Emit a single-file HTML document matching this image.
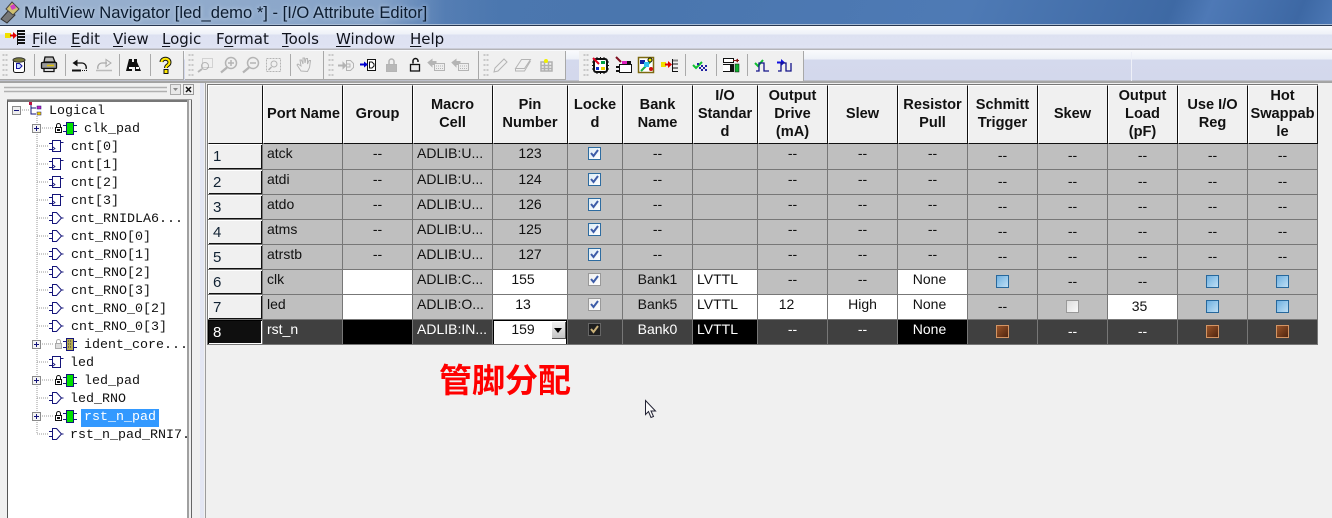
<!DOCTYPE html>
<html lang="en"><head><meta charset="utf-8"><title>MultiView Navigator</title>
<style>
html,body{margin:0;padding:0}
body{width:1332px;height:518px;position:relative;overflow:hidden;background:#f0f0f0;font-family:"Liberation Sans","Noto Sans CJK SC",sans-serif;color:#111}
.a{position:absolute}
#title{left:0;top:0;width:1332px;height:24px;background:linear-gradient(90deg,rgba(185,200,218,.75) 0,rgba(170,190,215,.6) 380px,rgba(120,150,195,.2) 445px,rgba(80,120,175,0) 500px),linear-gradient(112deg,#4f7ab2 0,#4a76ae 600px,#4e7ab5 900px,#3e69a4 1090px,#4e79b6 1125px,#3d68a4 1210px,#4c78b5 1245px,#4c78b5 1332px)}
#tt{left:24px;top:3px;font-size:16.58px;line-height:19px;color:#0c1c30;white-space:nowrap;text-shadow:0 0 4px #cfdceb}
#tl1{left:0;top:24px;width:1332px;height:1px;background:#a9bdd6}
#tl2{left:0;top:25px;width:1332px;height:1px;background:#27364f}
#menu{left:0;top:26px;width:1332px;height:24px;background:linear-gradient(#fcfdfe 0,#eef1f8 8px,#dde1f1 9px,#dfe3f3 22px,#b4b4b8 23px)}
#tb{left:0;top:50px;width:1332px;height:33px;background:linear-gradient(#fafbfd 0,#eef1f8 9px,#d4d9ed 10px,#d3d8ec 30px,#a8a8a8 31px,#a0a0a0 33px)}
.m{top:29px;font-family:"DejaVu Sans",sans-serif;font-size:15px;line-height:20px;color:#10131c;white-space:nowrap}
.m u{text-underline-offset:2px}
.bar{top:51px;height:28px;background:#f0f0f0;border-right:1px solid #a8a8a8;border-bottom:1px solid #a8a8a8}
#left{left:7px;top:100px;width:180px;height:418px;background:#fff;border-left:1px solid #555;border-top:2px solid #777;box-sizing:border-box}
.t{font-family:"Liberation Mono",monospace;font-size:13.33px;line-height:18px;height:18px;margin-top:2px;color:#111;white-space:pre}
#grid{left:207px;top:84px;display:grid;grid-template-columns:54px 79px 69px 79px 74px 54px 69px 64px repeat(8,69px);grid-template-rows:58px 25px repeat(7,24px);gap:1px;padding:1px;background:#777;font-size:14px}
#grid>div{position:relative;background:#bfbfbf;text-align:center;line-height:19px;white-space:nowrap;overflow:hidden;color:#111}
#grid>div.h{background:#f0f0f0;font-weight:bold;font-size:14.6px;line-height:18px;padding-bottom:1px;box-sizing:border-box;display:flex;align-items:center;justify-content:center;box-shadow:inset 1px 1px 0 #fff,1px 1px 0 #111;overflow:visible}
#grid>div.n{background:#f0f0f0;text-align:left;padding:3px 0 0 5px;box-sizing:border-box;font-size:15px;color:#123;box-shadow:inset 1px 1px 0 #fff,inset -1px -1px 0 #111}
#grid>div.l{text-align:left;padding-left:4px}
#grid>div.w{background:#fff}
#grid>div.k{background:#000;color:#fff}
#grid>div.d{background:#404040;color:#fff}
#grid>div.lo{padding-top:2px;box-sizing:border-box}
#grid>div.p{padding-right:14px;box-sizing:border-box}
#grid>div.no{padding-right:12px;box-sizing:border-box}
#grid>div.n5{padding-right:6px;box-sizing:border-box}
#grid>div.f{padding-right:6px;box-sizing:border-box}
.x{display:block;position:absolute;left:50%;top:5px;width:13px;height:13px;margin-left:-7px;box-sizing:border-box}
.b{border:1px solid #27689c;background:linear-gradient(135deg,#6fb0e0,#bfdff4)}
.g{border:1px solid #999;background:linear-gradient(135deg,#dcdcdc,#fafafa)}
.o{border:1px solid #d39463;background:linear-gradient(135deg,#9a5428,#4f2610)}
.x.c1,.x.c2,.x.c3{top:3px}
.x.c1{border:1px solid #2e6ca0;background:linear-gradient(135deg,#dcebf6,#fff)}
.x.c2{border:1px solid #999;background:linear-gradient(135deg,#eee,#fff)}
.x.c3{border:1px solid #666;background:#1f1f1f}
.x svg{display:block}
#combo{position:absolute;left:0;top:0;width:74px;height:24px;box-sizing:border-box;border:1px solid #000;border-bottom:0}
#btn{position:absolute;left:59px;top:2px;width:14px;height:17px;box-sizing:border-box;background:linear-gradient(#f0f0f0,#c4c4c4);border-right:1px solid #555;border-bottom:1px solid #555}
#btn:after{content:"";position:absolute;left:2px;top:6px;border:4px solid transparent;border-top:5px solid #000;border-bottom:0}
#red{left:439px;top:357px;font-size:33px;line-height:42px;font-weight:bold;color:#f00;white-space:nowrap;font-family:"Noto Sans CJK SC","WenQuanYi Zen Hei",sans-serif}
</style></head>
<body>
<div class="a" id="title"></div><div class="a" id="tt">MultiView Navigator [led_demo *] - [I/O Attribute Editor]</div>
<div class="a" id="tl1"></div><div class="a" id="tl2"></div>
<div class="a" id="menu"></div><div class="a" id="tb"></div>
<div class="a m" style="left:32px"><u>F</u>ile</div>
<div class="a m" style="left:71px"><u>E</u>dit</div>
<div class="a m" style="left:113px"><u>V</u>iew</div>
<div class="a m" style="left:162px"><u>L</u>ogic</div>
<div class="a m" style="left:216px">F<u>o</u>rmat</div>
<div class="a m" style="left:282px"><u>T</u>ools</div>
<div class="a m" style="left:336px"><u>W</u>indow</div>
<div class="a m" style="left:410px"><u>H</u>elp</div>
<div class="a bar" style="left:0;width:183px"></div>
<div class="a bar" style="left:185px;width:138px"></div>
<div class="a bar" style="left:324px;width:154px"></div>
<div class="a bar" style="left:479px;width:86px"></div>
<div class="a bar" style="left:579px;width:224px;height:30px"></div>
<div class="a" style="left:1131px;top:52px;width:1px;height:29px;background:#eef0f8"></div>
<div class="a" style="left:0;top:83px;width:205px;height:435px;background:#f0f0f0"></div>
<div class="a" style="left:200px;top:83px;width:4px;height:435px;background:#e3e6f3"></div>
<div class="a" style="left:205px;top:83px;width:1px;height:435px;background:#9c9c9c"></div>
<div class="a" style="left:187px;top:99px;width:2px;height:419px;background:#a0a0a0"></div>
<div class="a" style="left:191px;top:99px;width:1px;height:419px;background:#666"></div>
<div class="a" style="left:7px;top:99px;width:185px;height:1px;background:#a0a0a0"></div>
<div class="a" id="left"></div>
<div class="a t" style="left:49px;top:101px">Logical</div>
<div class="a t" style="left:84px;top:119px">clk_pad</div>
<div class="a t" style="left:71px;top:137px">cnt[0]</div>
<div class="a t" style="left:71px;top:155px">cnt[1]</div>
<div class="a t" style="left:71px;top:173px">cnt[2]</div>
<div class="a t" style="left:71px;top:191px">cnt[3]</div>
<div class="a t" style="left:71px;top:209px">cnt_RNIDLA6...</div>
<div class="a t" style="left:71px;top:227px">cnt_RNO[0]</div>
<div class="a t" style="left:71px;top:245px">cnt_RNO[1]</div>
<div class="a t" style="left:71px;top:263px">cnt_RNO[2]</div>
<div class="a t" style="left:71px;top:281px">cnt_RNO[3]</div>
<div class="a t" style="left:71px;top:299px">cnt_RNO_0[2]</div>
<div class="a t" style="left:71px;top:317px">cnt_RNO_0[3]</div>
<div class="a t" style="left:84px;top:335px;width:103px;overflow:hidden">ident_core...</div>
<div class="a t" style="left:70px;top:353px">led</div>
<div class="a t" style="left:84px;top:371px">led_pad</div>
<div class="a t" style="left:70px;top:389px">led_RNO</div>
<div class="a t" style="left:81px;top:407px;width:75px;padding-left:3px;background:#3399ff;color:#fff">rst_n_pad</div>
<div class="a t" style="left:70px;top:425px;width:117px;overflow:hidden">rst_n_pad_RNI7.</div>

<div class="a" id="grid">
<div class="h"></div><div class="h" style="justify-content:flex-start;padding-left:4px">Port Name</div><div class="h">Group</div><div class="h" style="text-align:center">Macro<br>Cell</div><div class="h" style="text-align:center">Pin<br>Number</div><div class="h" style="text-align:center">Locke<br>d</div><div class="h" style="text-align:center">Bank<br>Name</div><div class="h" style="text-align:center">I/O<br>Standar<br>d</div><div class="h" style="text-align:center">Output<br>Drive<br>(mA)</div><div class="h">Slew</div><div class="h" style="text-align:center">Resistor<br>Pull</div><div class="h" style="text-align:center">Schmitt<br>Trigger</div><div class="h">Skew</div><div class="h" style="text-align:center">Output<br>Load<br>(pF)</div><div class="h" style="text-align:center">Use I/O<br>Reg</div><div class="h" style="text-align:center">Hot<br>Swappab<br>le</div>

<div class="n">1</div><div class="l">atck</div><div>--</div><div class="l">ADLIB:U...</div><div>123</div><div><i class="x c1"><svg width="11" height="11"><use href="#chk"/></svg></i></div><div>--</div><div></div><div>--</div><div>--</div><div>--</div><div class="lo">--</div><div class="lo">--</div><div class="lo">--</div><div class="lo">--</div><div class="lo">--</div>
<div class="n">2</div><div class="l">atdi</div><div>--</div><div class="l">ADLIB:U...</div><div>124</div><div><i class="x c1"><svg width="11" height="11"><use href="#chk"/></svg></i></div><div>--</div><div></div><div>--</div><div>--</div><div>--</div><div class="lo">--</div><div class="lo">--</div><div class="lo">--</div><div class="lo">--</div><div class="lo">--</div>
<div class="n">3</div><div class="l">atdo</div><div>--</div><div class="l">ADLIB:U...</div><div>126</div><div><i class="x c1"><svg width="11" height="11"><use href="#chk"/></svg></i></div><div>--</div><div></div><div>--</div><div>--</div><div>--</div><div class="lo">--</div><div class="lo">--</div><div class="lo">--</div><div class="lo">--</div><div class="lo">--</div>
<div class="n">4</div><div class="l">atms</div><div>--</div><div class="l">ADLIB:U...</div><div>125</div><div><i class="x c1"><svg width="11" height="11"><use href="#chk"/></svg></i></div><div>--</div><div></div><div>--</div><div>--</div><div>--</div><div class="lo">--</div><div class="lo">--</div><div class="lo">--</div><div class="lo">--</div><div class="lo">--</div>
<div class="n">5</div><div class="l">atrstb</div><div>--</div><div class="l">ADLIB:U...</div><div>127</div><div><i class="x c1"><svg width="11" height="11"><use href="#chk"/></svg></i></div><div>--</div><div></div><div>--</div><div>--</div><div>--</div><div class="lo">--</div><div class="lo">--</div><div class="lo">--</div><div class="lo">--</div><div class="lo">--</div>
<div class="n">6</div><div class="l">clk</div><div class="w"></div><div class="l">ADLIB:C...</div><div class="w p">155</div><div><i class="x c2"><svg width="11" height="11"><use href="#chk"/></svg></i></div><div>Bank1</div><div class="w l">LVTTL</div><div>--</div><div>--</div><div class="w f">None</div><div><i class="x b"></i></div><div class="lo">--</div><div class="lo">--</div><div><i class="x b"></i></div><div><i class="x b"></i></div>
<div class="n">7</div><div class="l">led</div><div class="w"></div><div class="l">ADLIB:O...</div><div class="w p">13</div><div><i class="x c2"><svg width="11" height="11"><use href="#chk"/></svg></i></div><div>Bank5</div><div class="w l">LVTTL</div><div class="w no">12</div><div class="w">High</div><div class="w f">None</div><div class="lo">--</div><div><i class="x g"></i></div><div class="w lo n5">35</div><div><i class="x b"></i></div><div><i class="x b"></i></div>
<div class="n" style="background:#0f0f0f;color:#fff;box-shadow:inset 1px 1px 0 #000,inset -1px -1px 0 #fff">8</div><div class="l d">rst_n</div><div class="k"></div><div class="l d">ADLIB:IN...</div><div class="w p"><span id="combo"></span><span id="btn"></span>159</div><div class="d"><i class="x c3"><svg width="11" height="11"><use href="#chk3"/></svg></i></div><div class="d">Bank0</div><div class="k l">LVTTL</div><div class="d">--</div><div class="d">--</div><div class="k f">None</div><div class="d"><i class="x o"></i></div><div class="d lo">--</div><div class="d lo">--</div><div class="d"><i class="x o"></i></div><div class="d"><i class="x o"></i></div>
</div>

<div class="a" id="red">管脚分配</div>

<svg class="a" style="left:0;top:0" width="1332" height="518" viewBox="0 0 1332 518" xmlns="http://www.w3.org/2000/svg">
<defs>
<symbol id="chk" viewBox="0 0 11 11"><path d="M2 5l2.500 3L9 2" fill="none" stroke="#3d5ca8" stroke-width="2"/></symbol>
<symbol id="chk3" viewBox="0 0 11 11"><path d="M2 5l2.500 3L9 2" fill="none" stroke="#c9b078" stroke-width="2"/></symbol>
<g id="ff" fill="none" stroke="#14147a"><path d="M3.500 .5h8v11h-8zM0 3.500h3.500M11.500 2.500h3M0 9.500h3.500"/><path d="M4 7l2 1.500-2 1.500" stroke-width=".8"/></g>
<g id="gt" fill="none" stroke="#14147a"><path d="M3.500 .5h4l5 5.500-5 5.500h-4zM0 3.500h3.500M0 8.500h3.500M12.500 6h2"/></g>
<g id="pad"><path d="M1.500 4.500V2.500a2 2 0 0 1 4 0v2" fill="none" stroke="#111"/><rect x=".5" y="4.500" width="6" height="5" fill="#fff" stroke="#111"/><rect x="2" y="6" width="3" height="2" fill="#111"/><path d="M8 2.500h3.500M8 8.500h3.500M18.500 2.500h3.500M18.500 8.500h3.500" stroke="#14147a" fill="none"/><rect x="11.500" y="-.5" width="7" height="12" fill="#00e000" stroke="#14147a"/></g>
<g id="plus"><rect x=".5" y=".5" width="8" height="8" fill="#f4f4f4" stroke="#8a8a8a"/><path d="M2 4.500h5M4.500 2v5" stroke="#14147a"/></g>
<g id="grip"><path d="M.5 2v25M3.500 2v25" stroke="#c8c8c8" stroke-width="2" stroke-dasharray="2 3" fill="none"/></g>
</defs>

<!-- title app icon -->
<path d="M1 19l8-9 6 5-8 8z" fill="#777" stroke="#333"/><path d="M6 9l6-7 7 7-6 6z" fill="#cfc070" stroke="#444"/><path d="M10 6l4-2 2 4-4 2z" fill="#d040c0"/>
<!-- menu icon -->
<rect x="5" y="33" width="6" height="5" fill="#f0e000"/><path d="M10 35.500h5" stroke="#e00000" stroke-width="2"/><path d="M13 32l4 3.500-4 3.500z" fill="#e00000"/><path d="M17 31h8M17 34h8M17 37h8M17 40h8M17 43h8" stroke="#111" stroke-width="2"/><path d="M17.500 30v15" stroke="#111"/>

<!-- grippers -->
<use href="#grip" x="3" y="52"/><use href="#grip" x="189" y="52"/><use href="#grip" x="329" y="52"/><use href="#grip" x="484" y="52"/><use href="#grip" x="584" y="52"/>
<!-- separators -->
<path d="M34.500 54v22M65.500 54v22M119.500 54v22M150.500 54v22M290.500 54v22M685.500 54v22M716.500 54v22M747.500 54v22" stroke="#aaa"/>

<!-- db -->
<rect x="13.500" y="60.500" width="11" height="12" rx="2" fill="#fff" stroke="#111"/><ellipse cx="19" cy="60" rx="6" ry="2.200" fill="#7c7c3c" stroke="#333"/><path d="M16.500 63.500h3l2.500 2.500-2.500 2.500h-3z" fill="#cfe0ff" stroke="#1414a0"/>
<!-- printer -->
<path d="M45 57h8l2 5h-11z" fill="#bbb" stroke="#111" stroke-width="1.300"/><rect x="41.500" y="62.500" width="15" height="6" rx="1" fill="#999" stroke="#111" stroke-width="1.300"/><rect x="44" y="68.500" width="10" height="3" fill="#fff" stroke="#111" stroke-width="1.300"/><path d="M47 65.500h7" stroke="#e0c000" stroke-width="1.500"/>
<!-- undo -->
<path d="M77 63h5a4.500 4.500 0 0 1 4 6" fill="none" stroke="#111" stroke-width="1.300"/><path d="M72.500 63l5-3.500v7z" fill="#111"/><path d="M72 70.500h9" stroke="#111" stroke-width="2"/><path d="M82 70.500h6" stroke="#111" stroke-dasharray="1 1"/>
<!-- redo -->
<path d="M107 63h-5a4.500 4.500 0 0 0-4 6" fill="none" stroke="#aaa" stroke-width="1.300"/><path d="M111 63l-5-3.500v7z" fill="none" stroke="#aaa"/><path d="M96 70.500h16" stroke="#bbb" stroke-width="1.500"/>
<!-- binoculars -->
<path d="M129 59h3v3h2v-3h3v3l4 9h-6v-4h-3v4h-6z" fill="#111"/><rect x="129" y="67" width="3" height="2" fill="#fff"/><rect x="136" y="67" width="3" height="2" fill="#fff"/>
<!-- help -->
<path d="M161.500 62a4 3.500 0 1 1 6.500 3c-1.500 1-2 1.500-2 3" fill="none" stroke="#111" stroke-width="4"/><path d="M161.500 62a4 3.500 0 1 1 6.500 3c-1.500 1-2 1.500-2 3" fill="none" stroke="#ffe800" stroke-width="2"/><rect x="164" y="69.500" width="4" height="4" fill="#ffe800" stroke="#111"/>

<g fill="none" stroke="#b4b4b4">
<!-- zoom area -->
<rect x="202.500" y="58.500" width="10" height="9" stroke-dasharray="1 1"/><circle cx="205" cy="66" r="3.500"/><path d="M202 69l-4 3" stroke-width="2"/>
<!-- zoom in -->
<circle cx="231" cy="63" r="5.500" stroke-width="1.500"/><path d="M228 63h6M231 60v6" stroke-width="1.500"/><path d="M227 67.500l-6 5" stroke-width="2.200"/>
<!-- zoom out -->
<circle cx="253" cy="63" r="5.500" stroke-width="1.500"/><path d="M250 63h6" stroke-width="1.500"/><path d="M249 67.500l-6 5" stroke-width="2.200"/>
<!-- fit -->
<rect x="266.500" y="58.500" width="14" height="13" stroke-dasharray="2 1"/><circle cx="274" cy="64" r="3"/><path d="M271.500 67l-3 3" stroke-width="1.500"/>
<!-- hand -->
<path d="M301 71l-4-6 1-1 3 2-1-6h1.500l1.500 4V58h1.500l.5 5 1-4.500h1.500V64l1.500-3.500h1.500l-1 7-2 4z"/>
<!-- gray D -->
<path d="M346.500 60.500h4l3 3v4l-3 3h-4z" fill="#f0f0f0"/><path d="M338 65.500h5" stroke-width="2"/><path d="M343 62.500l3 3-3 3z" fill="#b4b4b4"/><path d="M347 64h3v3h-3"/>
<!-- gray lock -->
<path d="M389 64v-2.500a2.500 2.500 0 0 1 5 0V64" stroke-width="1.500"/><rect x="386.500" y="64.500" width="10" height="7" fill="#b8b8b8"/>
<!-- arrow grids -->
<path d="M428 62.500l4-3v2h4v3h-4v2z" fill="#b4b4b4"/><rect x="434.500" y="63.500" width="10" height="7" fill="#eee"/><path d="M436 66h7M436 68.500h7" stroke-dasharray="1 1"/>
<path d="M452 62.500l4-3v2h4v3h-4v2z" fill="#b4b4b4"/><rect x="458.500" y="63.500" width="10" height="7" fill="#eee"/><path d="M460 66h7M460 68.500h7" stroke-dasharray="1 1"/>
<!-- pencil -->
<path d="M494 72l1-4 9-9 3 3-9 9z"/>
<!-- eraser -->
<path d="M515.500 68.500l6-9h9l-6 9z M515.500 68.500v2.500h9l6-10"/>
</g>
<!-- grid -->
<path d="M541 62h11v9h-11zM544.500 62v9M548.500 62v9M541 65.500h11M541 68.500h11" fill="none" stroke="#b0b0b0" stroke-width="1.500"/><circle cx="546" cy="61" r="2" fill="#f0f000"/>
<!-- blue D -->
<rect x="367.500" y="59.500" width="8" height="11" fill="#fff" stroke="#111"/><path d="M369.500 62h2.500l2 2v2l-2 2h-2.500z" fill="none" stroke="#111"/><path d="M360 64.500h5" stroke="#0000d0" stroke-width="2"/><path d="M364 61.500l4 3-4 3z" fill="#0000d0"/>
<!-- open lock -->
<path d="M413 63.500V61a2.500 2.500 0 0 1 5 0v1" fill="none" stroke="#111" stroke-width="1.500"/><rect x="410.500" y="64.500" width="9" height="6.500" fill="#e8e8e8" stroke="#111" stroke-width="1.300"/>

<!-- chip -->
<rect x="594" y="59" width="13" height="13" rx="2" fill="#fff" stroke="#111" stroke-width="2"/><path d="M592 62h2M592 65.500h2M592 69h2M607 62h2M607 65.500h2M607 69h2M597 57v2M600.500 57v2M604 57v2M597 72v2M600.500 72v2M604 72v2" stroke="#111"/><rect x="601" y="61" width="4" height="3" fill="#00a040"/><rect x="596" y="67" width="3" height="3" fill="#1030d0"/><rect x="601" y="67" width="4" height="3" fill="#f0d000"/><path d="M593 58l6 6" stroke="#e00020" stroke-width="2"/>
<!-- box -->
<path d="M616 57l5 5" stroke="#801020" stroke-width="2"/><rect x="622" y="61" width="5" height="3" fill="#e020c0"/><rect x="627" y="61" width="4" height="3" fill="#111"/><rect x="619.500" y="64.500" width="12" height="8" fill="#fff" stroke="#111"/><rect x="616" y="66" width="4" height="2" fill="#111"/><rect x="616" y="70" width="4" height="2" fill="#111"/>
<!-- framed -->
<rect x="638.500" y="57.500" width="15" height="15" fill="#fff" stroke="#7c6a10" stroke-width="1.500"/><rect x="640" y="60" width="5" height="4" fill="#1020a0"/><path d="M641 71l10-10" stroke="#20b040" stroke-width="2"/><rect x="644" y="62" width="5" height="5" fill="#30c0f0"/><circle cx="650" cy="60" r="2" fill="#f0f000" stroke="#111"/><circle cx="651" cy="69" r="2" fill="#d01010"/>
<!-- arrow list -->
<rect x="661" y="62" width="5" height="5" fill="#f0e000"/><path d="M665 64.500h4" stroke="#e00000" stroke-width="2"/><path d="M668 61l4 3.500-4 3.500z" fill="#e00000"/><path d="M672 60.500h6" stroke="#888" stroke-width="2"/><path d="M672 64h6" stroke="#888" stroke-width="2"/><path d="M672 68h6M672 71.500h6M672.500 59v13" stroke="#111"/>
<!-- check grid -->
<path d="M693 65l3 3 6-6" fill="none" stroke="#10c030" stroke-width="2"/><path d="M697 63h2v2h-2zM701 65h2v2h-2zM705 65h2v2h-2zM699 67h2v2h-2zM703 67h2v2h-2zM701 69h2v2h-2zM705 69h2v2h-2z" fill="#2020a0"/>
<!-- bars -->
<rect x="723.500" y="58.500" width="10" height="4" fill="#fff" stroke="#111"/><path d="M733 60.500h6" stroke="#801010"/><path d="M735 60.500l3-2v4z" fill="#801010"/><rect x="723" y="64" width="11" height="8" fill="#111"/><rect x="723" y="65" width="7" height="6" fill="#fff"/><rect x="735" y="64" width="4" height="8" fill="#10b030" stroke="#111" stroke-width=".5"/>
<!-- waves -->
<path d="M755 63l3 3 5-6" fill="none" stroke="#10c030" stroke-width="2"/><path d="M756 71h3v-8h5v8h5" fill="none" stroke="#14148a" stroke-width="1.300"/>
<path d="M777 62.500h5" stroke="#1010e0" stroke-width="2"/><path d="M781 59l4 3.500-4 3.500z" fill="#1010e0"/><path d="M778 71h3v-8h5v8h5v-8" fill="none" stroke="#14148a" stroke-width="1.300"/>

<!-- panel grip -->
<path d="M4 87.500h163M4 91.500h163" stroke="#b0b0b0" stroke-width="1.500"/>
<rect x="170.500" y="84.500" width="10" height="10" fill="#e8e8e8" stroke="#aaa"/><path d="M173 88h5l-2.500 3z" fill="#888"/>
<rect x="183.500" y="84.500" width="10" height="10" fill="#f0f0f0" stroke="#999"/><path d="M186 87l5 5M191 87l-5 5" stroke="#111" stroke-width="1.500"/>

<!-- tree lines -->
<path d="M37 116v318M22 110h7M42 128h11M42 344h11M42 380h11M42 416h11M37 146h12M37 164h12M37 182h12M37 200h12M37 218h12M37 236h12M37 254h12M37 272h12M37 290h12M37 308h12M37 326h12M37 362h12M37 398h12M37 434h12" stroke="#999" stroke-dasharray="1 1" fill="none"/>
<rect x="12.500" y="106.500" width="8" height="8" fill="#eee" stroke="#8a8a8a"/><path d="M14 110.500h5" stroke="#14147a"/>
<path d="M31 103v11h5M31 108h5" stroke="#14147a" fill="none"/><rect x="29" y="102" width="3" height="3" fill="#c01040"/><rect x="37" y="106" width="4" height="3" fill="#c020c0" stroke="#14147a" stroke-width=".5"/><rect x="37" y="112" width="4" height="3" fill="#f0d000" stroke="#14147a" stroke-width=".5"/>
<use href="#plus" x="32" y="124"/><use href="#plus" x="32" y="340"/><use href="#plus" x="32" y="376"/><use href="#plus" x="32" y="412"/>
<use href="#pad" x="55" y="123"/><use href="#pad" x="55" y="375"/><use href="#pad" x="55" y="411"/>
<g transform="translate(55 339)"><path d="M1.500 4.500V2.500a2 2 0 0 1 4 0v2" fill="none" stroke="#aaa"/><rect x=".5" y="4.500" width="6" height="5" fill="#ddd" stroke="#aaa"/><path d="M8 2.500h3.500M8 8.500h3.500M18.500 2.500h3.500M18.500 8.500h3.500" stroke="#14147a"/><rect x="11.500" y="-.5" width="7" height="12" fill="#b4a850" stroke="#14147a"/><path d="M13 2h4M13 5h4M13 8h4" stroke="#333" stroke-dasharray="1 1"/></g>
<use href="#ff" x="49" y="140"/><use href="#ff" x="49" y="158"/><use href="#ff" x="49" y="176"/><use href="#ff" x="49" y="194"/><use href="#ff" x="49" y="356"/>
<use href="#gt" x="49" y="212"/><use href="#gt" x="49" y="230"/><use href="#gt" x="49" y="248"/><use href="#gt" x="49" y="266"/><use href="#gt" x="49" y="284"/><use href="#gt" x="49" y="302"/><use href="#gt" x="49" y="320"/><use href="#gt" x="49" y="392"/><use href="#gt" x="49" y="428"/>

<!-- cursor -->
<path d="M645.500 400.500v14l3-3 2.500 6 2.500-1-2.500-5.500h4.500z" fill="#fafafa" stroke="#223"/>
</svg>
</body></html>
